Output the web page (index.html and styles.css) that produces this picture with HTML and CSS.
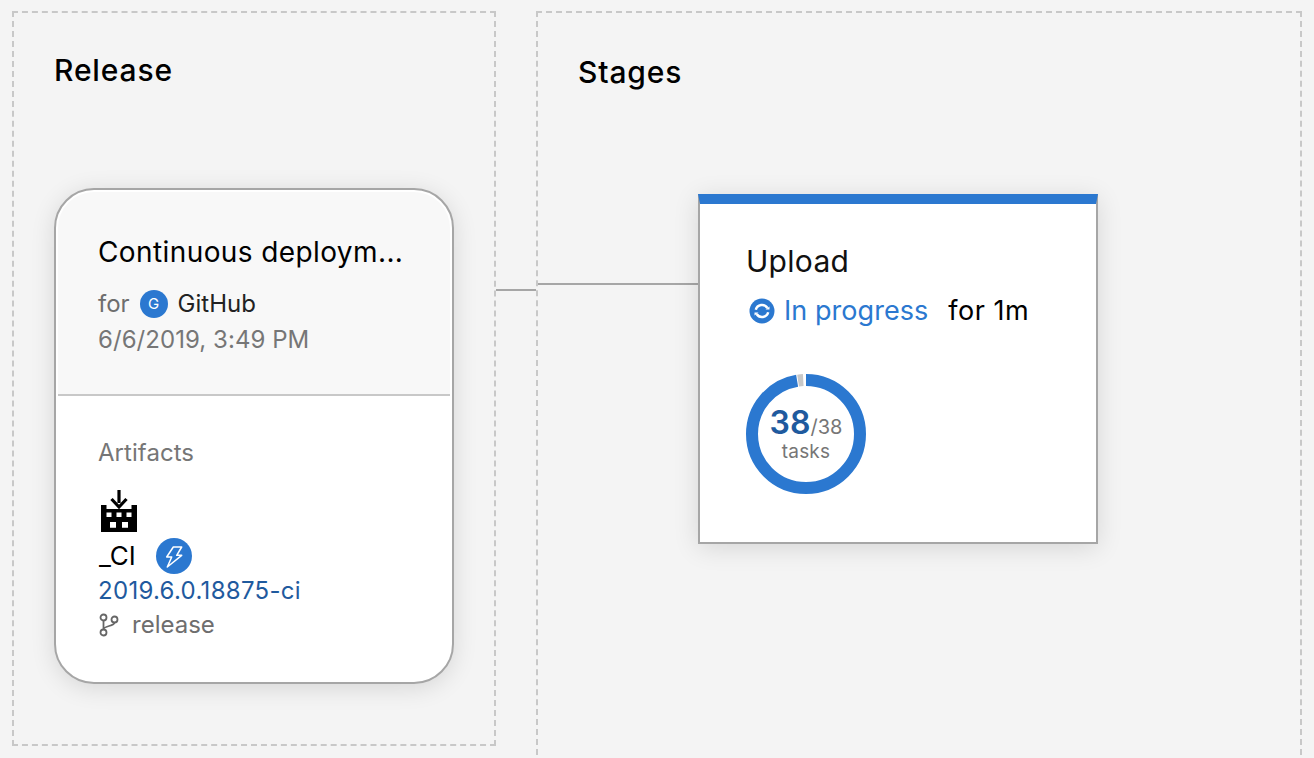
FILE: index.html
```html
<!DOCTYPE html>
<html lang="en">
<head>
<meta charset="utf-8">
<title>Release pipeline</title>
<link rel="stylesheet" href="styles.css">
</head>
<body>
<main class="canvas">
  <section class="panel panel-release">
    <h2 class="panel-title">Release</h2>
    <article class="release-card">
      <header class="release-head">
        <div class="release-name">Continuous deploym...</div>
        <div class="release-for">
          <span class="muted">for</span>
          <span class="avatar">G</span>
          <span class="source">GitHub</span>
        </div>
        <div class="release-date">6/6/2019, 3:49 PM</div>
      </header>
      <div class="release-body">
        <div class="artifacts-label">Artifacts</div>
        <svg class="factory" width="36" height="43" viewBox="0 0 36 43" aria-hidden="true">
          <path d="M16.400 0h3.200v13h-3.200z" fill="#000"/>
          <path d="M10.500 9l7.500 8 7.500-8" fill="none" stroke="#000" stroke-width="3.200"/>
          <path d="M0 15h5.500v4h25v-4H36v27H0z" fill="#000"/>
          <path d="M5.500 22.500h5v4.500h-5zm10 0h5v4.500h-5zm10 0h5v4.500h-5zM9 32h6v5.700H9zm12 0h6v5.700h-6z" fill="#fff"/>
        </svg>
        <div class="artifact-row">
          <span class="artifact-name">_CI</span>
          <span class="trigger">
            <svg width="36" height="36" viewBox="0 0 36 36" aria-hidden="true">
              <path d="M17.300 9h8.400l-5 8.300h5L11.300 29l4.400-10h-5z" fill="none" stroke="#fff" stroke-width="1.500" stroke-linejoin="round"/>
            </svg>
          </span>
        </div>
        <a class="build-link">2019.6.0.18875-ci</a>
        <div class="branch">
          <svg width="20" height="24" viewBox="0 0 20 24" aria-hidden="true">
            <g fill="none" stroke="#666" stroke-width="1.800">
              <circle cx="4.500" cy="4.500" r="3"/>
              <circle cx="4.500" cy="19.500" r="3"/>
              <circle cx="15.500" cy="6.500" r="3"/>
              <path d="M4.500 7.500v9M15.500 9.500c0 4-11 3-11 7"/>
            </g>
          </svg>
          <span>release</span>
        </div>
      </div>
    </article>
  </section>

  <div class="gutter"><div class="line gutter-line"></div></div>

  <section class="panel panel-stages">
    <h2 class="panel-title stages-title">Stages</h2>
    <div class="stage-row">
      <div class="line stage-line"></div>
      <article class="stage-card">
        <div class="stage-name">Upload</div>
        <div class="stage-status">
          <svg class="status-icon" width="26" height="26" viewBox="0 0 26 26" aria-hidden="true">
            <circle cx="13" cy="13" r="12.500" fill="#2b78d0"/>
            <path d="M6.800 11.800a6.400 6.400 0 0 1 11.600-1.800" fill="none" stroke="#fff" stroke-width="2.500"/>
            <path d="M19.200 14.200a6.400 6.400 0 0 1-11.600 1.800" fill="none" stroke="#fff" stroke-width="2.500"/>
            <path d="M16.500 11.500h4v-3zM9.500 14.500h-4v3z" fill="#fff"/>
          </svg>
          <span class="status-text">In progress</span>
          <span class="status-time">for 1m</span>
        </div>
        <div class="donut">
          <svg width="122" height="122" viewBox="0 0 122 122" aria-hidden="true">
            <circle cx="61" cy="61" r="54" fill="none" stroke="#2b78d0" stroke-width="12" pathLength="360" stroke-dasharray="350.500 9.500" transform="rotate(-90 61 61)"/>
            <circle cx="61" cy="61" r="54" fill="none" stroke="#c8c8c8" stroke-width="12" pathLength="360" stroke-dasharray="5.500 354.500" stroke-dashoffset="-351.500" transform="rotate(-90 61 61)"/>
          </svg>
          <div class="donut-text">
            <div class="donut-count"><b>38</b><span>/38</span></div>
            <div class="donut-label">tasks</div>
          </div>
        </div>
      </article>
    </div>
  </section>
</main>
</body>
</html>
```
FILE: styles.css
```css
* { box-sizing: border-box; }
html, body { margin: 0; height: 100%; }
body {
  background: #f4f4f4;
  font-family: Inter, "Noto Sans", "Liberation Sans", sans-serif;
  color: #000;
  overflow: hidden;
}
.canvas {
  display: flex;
  align-items: flex-start;
  padding: 11px 0 0 12px;
}
.panel {
  border: 2px dashed #c8c8c8;
  flex: none;
}
.panel-release {
  width: 484px;
  height: 735px;
  padding: 0 0 0 40px;
}
.panel-stages {
  width: 766px;
  height: 744px;
  border-bottom: 0;
  padding: 0;
}
.panel-title {
  margin: 0;
  font-size: 30px;
  line-height: 40px;
  font-weight: 500;
  padding-top: 37px;
  letter-spacing: .85px;
}
.stages-title { padding: 39px 0 0 40px; }

.release-card {
  width: 400px;
  height: 496px;
  margin-top: 98px;
  padding: 2px;
  border: 2px solid #a6a6a6;
  border-radius: 40px;
  background: #fff;
  box-shadow: 0 4px 24px rgba(0,0,0,.12);
}
.release-head {
  height: 204px;
  background: #f8f8f8;
  border-bottom: 2px solid #c8c8c8;
  border-radius: 36px 36px 0 0;
  padding: 40px 40px 0;
}
.release-name { font-size: 28px; line-height: 40px; white-space: nowrap; letter-spacing: .4px; }
.release-for {
  display: flex;
  align-items: center;
  margin-top: 16px;
  font-size: 24px;
  line-height: 32px;
}
.muted { color: #6e6e6e; }
.avatar {
  width: 28px;
  height: 28px;
  margin: 0 10px;
  border-radius: 50%;
  background: #2b78d0;
  color: #fff;
  font-size: 15px;
  display: flex;
  align-items: center;
  justify-content: center;
}
.source { color: #222; }
.release-date { margin-top: 4px; font-size: 24px; line-height: 32px; color: #767676; letter-spacing: .05px; }
.release-body { padding: 41px 40px 0; }
.artifacts-label { font-size: 24px; line-height: 32px; color: #767676; letter-spacing: .05px; }
.factory { display: block; margin: 21px 0 0 3px; }
.artifact-row { display: flex; align-items: center; margin-top: 5px; height: 36px; }
.artifact-name { font-size: 26px; line-height: 36px; margin-left: 1px; }
.trigger {
  width: 36px;
  height: 36px;
  margin-left: 20px;
  border-radius: 50%;
  background: #2b78d0;
}
.trigger svg { display: block; }
.build-link { display: block; margin-top: 1px; font-size: 24px; line-height: 32px; color: #1f5a9e; letter-spacing: .3px; }
.branch {
  display: flex;
  align-items: center;
  gap: 13px;
  margin: 1px 0 0 1px;
  font-size: 24px;
  line-height: 34px;
  color: #6e6e6e;
}

.gutter { width: 40px; flex: none; padding-top: 278px; }
.line { height: 2px; background: #a6a6a6; }
.stage-row { display: flex; align-items: flex-start; margin-top: 102px; }
.stage-line { width: 160px; margin-top: 89px; flex: none; }
.stage-card {
  width: 400px;
  height: 350px;
  background: #fff;
  border: 2px solid #a6a6a6;
  border-top: 10px solid #2b78d0;
  padding: 36px 46px 0;
  box-shadow: 0 4px 24px rgba(0,0,0,.12);
}
.stage-name { font-size: 30px; line-height: 42px; color: #111; letter-spacing: .3px; }
.stage-status { display: flex; align-items: center; margin-top: 11px; font-size: 27px; line-height: 36px; letter-spacing: .05px; }
.status-icon { margin: 0 9px 0 3px; flex: none; }
.status-text { color: #2b78d0; }
.status-time { margin-left: 20px; letter-spacing: .5px; }
.donut { position: relative; width: 122px; height: 122px; margin-top: 44px; margin-left: -1px; }
.donut svg { display: block; }
.donut-text {
  position: absolute;
  inset: 0;
  display: flex;
  flex-direction: column;
  align-items: center;
  justify-content: center;
  padding-top: 2px;
}
.donut-count { line-height: 30px; color: #767676; font-size: 20px; white-space: nowrap; }
.donut-count b { font-size: 32px; font-weight: 600; color: #1f5a9e; }
.donut-label { font-size: 19px; line-height: 20px; color: #767676; letter-spacing: .2px; }
```
